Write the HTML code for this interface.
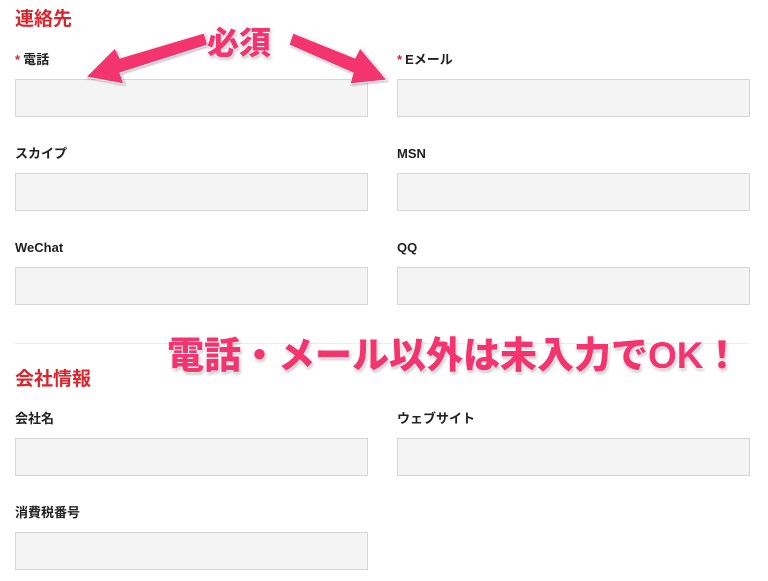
<!DOCTYPE html>
<html><head><meta charset="utf-8"><style>
body{margin:0;width:768px;height:581px;background:#fff;position:relative;overflow:hidden;font-family:"Liberation Sans","Noto Sans CJK JP",sans-serif}
.h{position:absolute;left:15px;color:#d9262e;font-size:19px;font-weight:bold;line-height:24px}
.l{position:absolute;font-size:13px;font-weight:bold;color:#222;line-height:18px}
.l b{color:#d9262e;margin-right:3px}
.i{position:absolute;width:353px;height:38px;background:#f4f4f4;border:1px solid #d6d6d6;box-sizing:border-box}
.c{position:absolute;color:#f3346f;font-weight:900;text-shadow:0 0 2px #fff,0 0 2px #fff,0 0 3px #fff,1px 2px 3px rgba(0,0,0,.35);white-space:nowrap}
</style></head><body>
<div class="h" style="top:8px">連絡先</div>
<div class="l" style="left:15px;top:51px"><b>*</b>電話</div>
<div class="l" style="left:397px;top:51px"><b>*</b>Eメール</div>
<div class="i" style="left:15px;top:79px"></div>
<div class="i" style="left:397px;top:79px"></div>
<div class="l" style="left:15px;top:145px">スカイプ</div>
<div class="l" style="left:397px;top:145px">MSN</div>
<div class="i" style="left:15px;top:173px"></div>
<div class="i" style="left:397px;top:173px"></div>
<div class="l" style="left:15px;top:239px">WeChat</div>
<div class="l" style="left:397px;top:239px">QQ</div>
<div class="i" style="left:15px;top:267px"></div>
<div class="i" style="left:397px;top:267px"></div>
<div style="position:absolute;left:15px;right:19px;top:343px;height:1px;background:#ececec"></div>
<div class="h" style="top:368px">会社情報</div>
<div class="l" style="left:15px;top:410px">会社名</div>
<div class="l" style="left:397px;top:410px">ウェブサイト</div>
<div class="i" style="left:15px;top:438px"></div>
<div class="i" style="left:397px;top:438px"></div>
<div class="l" style="left:15px;top:504px">消費税番号</div>
<div class="i" style="left:15px;top:532px"></div>
<svg style="position:absolute;left:0;top:0" width="768" height="581">
<g fill="#f3346f" stroke="#fff" stroke-width="1" style="filter:drop-shadow(1px 1px 1px rgba(0,0,0,.3))">
<polygon points="204,33 120,58 115,48 86,77 124,84 120,73 208,45"/>
<polygon points="293,33 355,58 360,48 387,80 350,84 353,73 289,45"/>
</g>
</svg>
<div class="c" style="left:207px;top:18px;font-size:32px">必須</div>
<div class="c" style="left:167px;top:325px;font-size:37px;letter-spacing:0px">電話・メール以外は未入力でOK！</div>
</body></html>
